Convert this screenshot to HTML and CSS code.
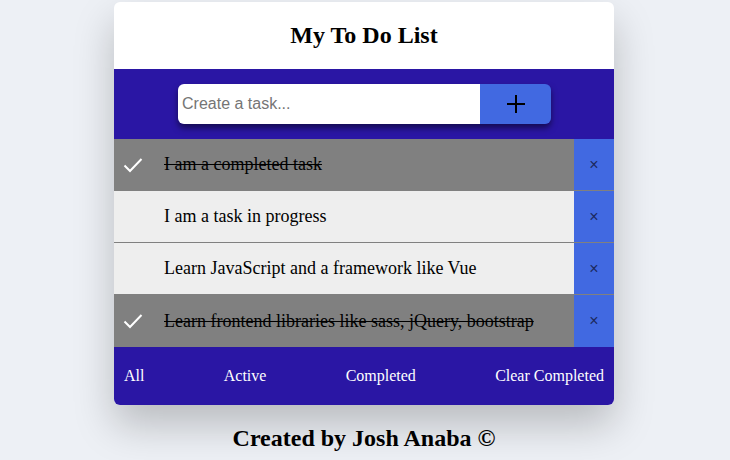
FILE: index.html
```html
<!DOCTYPE html>
<html>
<head>
<meta charset="utf-8">
<link rel="stylesheet" href="styles.css">
</head>
<body>
<div class="card">
  <header class="head"><h1 class="title">My To Do List</h1></header>
  <div class="create">
    <div class="create-box">
      <input class="create-input" type="text" placeholder="Create a task...">
      <button class="create-btn" aria-label="Add">
        <svg width="20" height="20" viewBox="0 0 20 20"><path d="M10 1V19M1 10H19" stroke="#000" stroke-width="2" fill="none"/></svg>
      </button>
    </div>
  </div>
  <ul class="tasks">
    <li class="task done">
      <span class="check"><svg width="20" height="16" viewBox="0 0 20 16"><path d="M1.5 8.5L7 14L18.5 2" stroke="#fff" stroke-width="2" fill="none"/></svg></span>
      <span class="label">I am a completed task</span>
      <button class="del">×</button>
    </li>
    <li class="task">
      <span class="check"></span>
      <span class="label">I am a task in progress</span>
      <button class="del">×</button>
    </li>
    <li class="task">
      <span class="check"></span>
      <span class="label">Learn JavaScript and a framework like Vue</span>
      <button class="del">×</button>
    </li>
    <li class="task done">
      <span class="check"><svg width="20" height="16" viewBox="0 0 20 16"><path d="M1.5 8.5L7 14L18.5 2" stroke="#fff" stroke-width="2" fill="none"/></svg></span>
      <span class="label">Learn frontend libraries like sass, jQuery, bootstrap</span>
      <button class="del">×</button>
    </li>
  </ul>
  <nav class="filters">
    <span class="filter">All</span>
    <span class="filter">Active</span>
    <span class="filter">Completed</span>
    <span class="filter">Clear Completed</span>
  </nav>
</div>
<h2 class="credit">Created by Josh Anaba ©</h2>
</body>
</html>
```

FILE: styles.css
```css
* { box-sizing: border-box; }
html, body { height: 100%; }
body {
  margin: 0;
  background: #edf0f5;
  font-family: "Liberation Serif", "Times New Roman", serif;
  display: flex;
  flex-direction: column;
  align-items: center;
}
.card {
  width: 500px;
  margin: 2px 2px 0 0;
  border-radius: 6px;
  overflow: hidden;
  background: #fff;
  box-shadow: 0 20px 40px rgba(0, 0, 0, 0.22);
}
.head {
  height: 67px;
  display: flex;
  align-items: center;
  justify-content: center;
}
.title {
  margin: 0;
  font-size: 24px;
  font-weight: bold;
  color: #000;
}
.create {
  background: #2a16a4;
  height: 70px;
  display: flex;
  align-items: center;
  justify-content: center;
}
.create-box {
  display: flex;
  height: 40px;
  border-radius: 6px;
  box-shadow: 0 4px 6px rgba(0, 0, 0, 0.5);
  margin-left: 1px;
}
.create-input {
  width: 302px;
  height: 40px;
  border: none;
  outline: none;
  border-radius: 6px 0 0 6px;
  padding: 0 4px;
  font-family: "Liberation Sans", Arial, sans-serif;
  font-size: 16px;
  background: #fff;
}
.create-input::placeholder { color: #757575; }
.create-btn {
  width: 71px;
  height: 40px;
  border: none;
  background: #4169e1;
  border-radius: 0 6px 6px 0;
  display: flex;
  align-items: center;
  justify-content: center;
  padding: 0;
}
.tasks {
  list-style: none;
  margin: 0;
  padding: 0;
}
.task {
  height: 52px;
  display: flex;
  align-items: center;
  background: #eeeeee;
  border-bottom: 1px solid #808080;
}
.task:last-child { border-bottom: none; }
.task.done { background: #808080; }
.check {
  width: 50px;
  padding-left: 9px;
  display: flex;
  align-items: center;
}
.label {
  flex: 1;
  font-size: 18px;
  color: #000;
}
.done .label { text-decoration: line-through; }
.del {
  width: 40px;
  align-self: stretch;
  border: none;
  background: #4169e1;
  color: #1c2a5c;
  font-size: 16px;
  font-family: "Liberation Sans", Arial, sans-serif;
  padding: 0;
}
.filters {
  height: 58px;
  background: #2a16a4;
  display: flex;
  align-items: center;
  justify-content: space-between;
  padding: 0 10px;
}
.filter {
  color: #fff;
  font-size: 16px;
}
.credit {
  margin: 20px 2px 0 0;
  font-size: 24px;
  font-weight: bold;
  color: #000;
}
```
